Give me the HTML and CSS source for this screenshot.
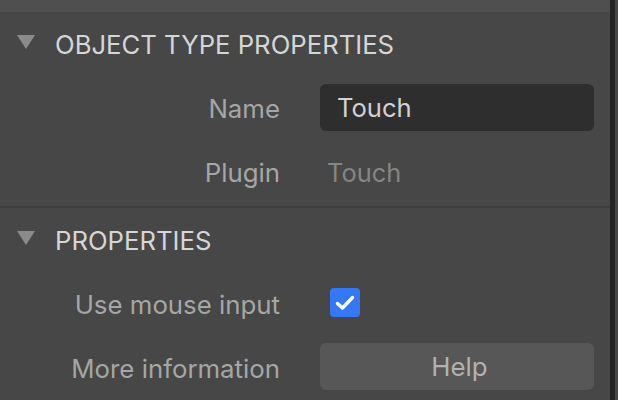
FILE: index.html
```html
<!DOCTYPE html>
<html>
<head>
<meta charset="utf-8">
<link rel="stylesheet" href="styles.css">
</head>
<body>
<div class="window">
  <div class="panel">
    <div class="topband"></div>
    <section class="section">
      <div class="header">
        <svg class="tri" width="18" height="14" viewBox="0 0 18 14"><polygon points="0,0 18,0 9,14" fill="#8b8b8b"/></svg>
        <span class="title">OBJECT TYPE PROPERTIES</span>
      </div>
      <div class="row">
        <div class="label">Name</div>
        <div class="value"><div class="input">Touch</div></div>
      </div>
      <div class="row">
        <div class="label">Plugin</div>
        <div class="value"><span class="static">Touch</span></div>
      </div>
    </section>
    <div class="sep"></div>
    <section class="section">
      <div class="header">
        <svg class="tri" width="18" height="14" viewBox="0 0 18 14"><polygon points="0,0 18,0 9,14" fill="#8b8b8b"/></svg>
        <span class="title">PROPERTIES</span>
      </div>
      <div class="row">
        <div class="label">Use mouse input</div>
        <div class="value">
          <div class="check">
            <svg width="20" height="16" viewBox="0 0 20 16"><path d="M2.5 8.5 L7.5 13 L17.5 2.5" fill="none" stroke="#fff" stroke-width="3.4" stroke-linecap="round" stroke-linejoin="round"/></svg>
          </div>
        </div>
      </div>
      <div class="row">
        <div class="label">More information</div>
        <div class="value"><div class="button">Help</div></div>
      </div>
    </section>
  </div>
  <div class="scrollbar"></div>
  <div class="edge"></div>
</div>
</body>
</html>
```

FILE: styles.css
```css
html, body {
  margin: 0;
  padding: 0;
  background: #474747;
}
body {
  font-family: Inter, "Noto Sans", "Liberation Sans", sans-serif;
  width: 618px;
  height: 400px;
  overflow: hidden;
}
.window {
  display: flex;
  width: 618px;
  height: 400px;
}
.panel {
  width: 610px;
  display: flex;
  flex-direction: column;
}
.topband {
  height: 12px;
  background: #4f4f4f;
}
.scrollbar {
  width: 5px;
  background: #242424;
}
.edge {
  width: 3px;
  background: #474747;
}
.header {
  height: 64px;
  display: flex;
  align-items: center;
}
.tri {
  margin-left: 17px;
  margin-top: -4px;
  flex: none;
}
.title {
  margin-left: 20px;
  font-size: 25.7px;
  color: #d6d6d6;
}
.row {
  height: 64px;
  display: flex;
  align-items: center;
}
.label {
  width: 280px;
  text-align: right;
  font-size: 25.8px;
  color: #a6a6a6;
  flex: none;
}
.value {
  margin-left: 40px;
  flex: 1;
  display: flex;
  align-items: center;
}
.input {
  width: 274px;
  height: 47px;
  box-sizing: border-box;
  background: #2e2e2e;
  border-radius: 6px;
  padding-left: 17px;
  display: flex;
  align-items: center;
  font-size: 25.6px;
  color: #d2d2d2;
  margin-top: -1px;
}
.static {
  padding-left: 7px;
  font-size: 25.4px;
  color: #858585;
}
.sep {
  height: 2px;
  margin-top: 2px;
  background: #3c3c3c;
}
.check {
  margin-left: 10px;
  width: 30px;
  height: 29px;
  border-radius: 4px;
  background: #3478f6;
  display: flex;
  align-items: center;
  justify-content: center;
  margin-top: -3px;
}
.button {
  width: 274px;
  height: 47px;
  box-sizing: border-box;
  padding-left: 5px;
  border-radius: 6px;
  background: #575757;
  display: flex;
  align-items: center;
  justify-content: center;
  font-size: 25.8px;
  color: #b2b2b2;
  margin-top: -3px;
}
```
